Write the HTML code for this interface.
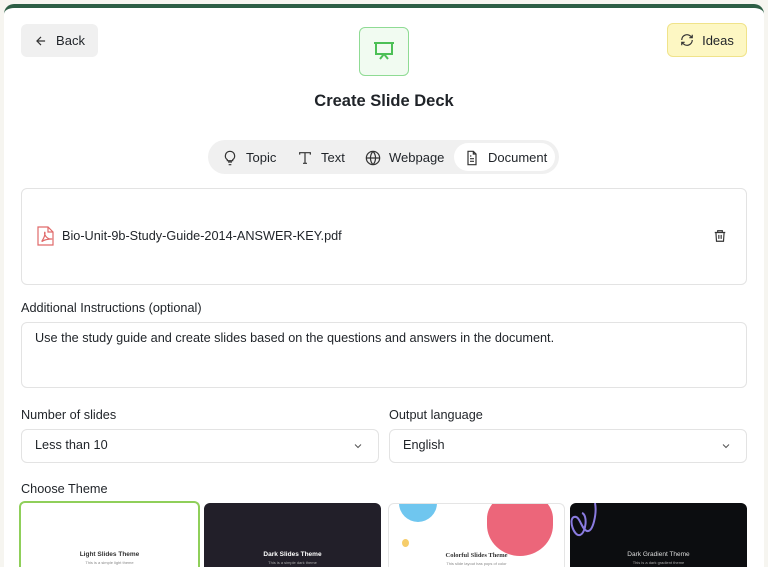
<!DOCTYPE html>
<html style="width:768px;height:567px;overflow:hidden"><head><style>
*{box-sizing:border-box;margin:0;padding:0}
body{width:768px;height:567px;overflow:hidden;background:#f6f5f0;font-family:"Liberation Sans",sans-serif;color:#1f2328;position:relative}
.card{position:absolute;left:4px;top:4px;width:760px;height:563px;background:#fff;border-radius:10px 10px 0 0;overflow:hidden;border-top:4px solid #2d5e45}
.abs{position:absolute}
.btn{position:absolute;border-radius:6px;font-size:13px;display:flex;align-items:center;gap:8px;justify-content:center}
.lbl{position:absolute;font-size:12.7px;color:#1f2328}
.box{position:absolute;border:1px solid #e3e3e3;border-radius:6px;background:#fff}
.theme{position:absolute;top:503px;width:177px;height:64px;border-radius:6px 6px 0 0;overflow:hidden;text-align:center}
.theme .t{position:absolute;top:48px;width:100%;font-size:6.5px;font-weight:bold}
.theme .s{position:absolute;top:57px;width:100%;font-size:4px;color:#888}
</style></head><body>
<div class="card"></div>
<div class="btn" style="left:21px;top:24px;width:77px;height:33px;background:#f0f0f0">
<svg width="14" height="14" viewBox="0 0 24 24" fill="none" stroke="#333" stroke-width="2"><path d="M19 12H5M12 19l-7-7 7-7"/></svg>Back</div>
<div class="btn" style="left:667px;top:23px;width:80px;height:34px;background:#fdf7c3;border:1px solid #f0e38a">
<svg width="14" height="14" viewBox="0 0 24 24" fill="none" stroke="#333" stroke-width="2"><path d="M3 12a9 9 0 0 1 15-6.7L21 8M21 3v5h-5M21 12a9 9 0 0 1-15 6.7L3 16M3 21v-5h5"/></svg>Ideas</div>
<div class="abs" style="left:359px;top:27px;width:50px;height:49px;border:1px solid #8fdb94;border-radius:6px;background:#f1fbf1;display:flex;align-items:center;justify-content:center">
<svg width="24" height="24" viewBox="0 0 24 24" fill="none" stroke="#4cc056" stroke-width="2"><path d="M2 3h20M4 3v11h16V3M12 14l-4 5M12 14l4 5"/></svg></div>
<div class="abs" style="left:0;width:768px;top:92px;text-align:center;font-size:16.5px;font-weight:bold">Create Slide Deck</div>
<div class="abs" style="left:208px;top:140px;width:351px;height:34px;background:#f0f0f0;border-radius:17px"></div>
<div class="abs" style="left:454px;top:143px;width:101px;height:28px;background:#fff;border-radius:14px"></div>
<div class="abs" style="top:150px;left:222px;font-size:13px;display:flex;gap:0">
<span style="position:absolute;left:0;display:flex;gap:8px;white-space:nowrap"><svg width="16" height="16" viewBox="0 0 24 24" fill="none" stroke="#333" stroke-width="1.8"><path d="M9 18h6M10 22h4M12 2a7 7 0 0 0-4 12.7V16h8v-1.3A7 7 0 0 0 12 2z"/></svg>Topic</span>
<span style="position:absolute;left:75px;display:flex;gap:8px;white-space:nowrap"><svg width="16" height="16" viewBox="0 0 24 24" fill="none" stroke="#333" stroke-width="1.8"><path d="M4 7V4h16v3M12 4v16M9 20h6"/></svg>Text</span>
<span style="position:absolute;left:143px;display:flex;gap:8px;white-space:nowrap"><svg width="16" height="16" viewBox="0 0 24 24" fill="none" stroke="#333" stroke-width="1.8"><circle cx="12" cy="12" r="10"/><path d="M2 12h20M12 2a15 15 0 0 1 0 20M12 2a15 15 0 0 0 0 20"/></svg>Webpage</span>
<span style="position:absolute;left:242px;display:flex;gap:8px;white-space:nowrap"><svg width="16" height="16" viewBox="0 0 24 24" fill="none" stroke="#333" stroke-width="1.8"><path d="M14 2H6v20h12V6zM14 2v4h4M9 13h6M9 17h6M9 9h2"/></svg>Document</span>
</div>
<div class="box" style="left:21px;top:188px;width:726px;height:97px"></div>
<svg class="abs" style="left:37px;top:226px" width="18" height="20" viewBox="0 0 18 20" fill="none" stroke="#e06a6a" stroke-width="1.2"><path d="M1 1h10l5 5v13H1zM11 1v5h5"/><path d="M5 15c2-3 3-6 3-8s-1 0-0 2 3 4 6 4-3 0-6 1-3 2-3 1z"/></svg>
<div class="lbl" style="left:62px;top:229px">Bio-Unit-9b-Study-Guide-2014-ANSWER-KEY.pdf</div>
<svg class="abs" style="left:713px;top:229px" width="14" height="14" viewBox="0 0 24 24" fill="none" stroke="#333" stroke-width="2"><path d="M3 6h18M8 6V3h8v3M5 6l1 15h12l1-15M10 10v7M14 10v7"/></svg>
<div class="lbl" style="left:21px;top:301px">Additional Instructions (optional)</div>
<div class="box" style="left:21px;top:322px;width:726px;height:66px"></div>
<div class="lbl" style="left:35px;top:331px">Use the study guide and create slides based on the questions and answers in the document.</div>
<div class="lbl" style="left:21px;top:408px">Number of slides</div>
<div class="lbl" style="left:389px;top:408px">Output language</div>
<div class="box" style="left:21px;top:429px;width:358px;height:34px"></div>
<div class="lbl" style="left:35px;top:438px">Less than 10</div>
<div class="box" style="left:389px;top:429px;width:358px;height:34px"></div>
<div class="lbl" style="left:403px;top:438px">English</div>
<svg class="abs" style="left:352px;top:440px" width="12" height="12" viewBox="0 0 24 24" fill="none" stroke="#555" stroke-width="2"><path d="M6 9l6 6 6-6"/></svg>
<svg class="abs" style="left:720px;top:440px" width="12" height="12" viewBox="0 0 24 24" fill="none" stroke="#555" stroke-width="2"><path d="M6 9l6 6 6-6"/></svg>
<div class="lbl" style="left:21px;top:482px">Choose Theme</div>
<div class="theme" style="left:19px;top:501px;width:181px;height:66px;border:2px solid #8fcf5a;border-bottom:none;background:#fff;color:#333"><div class="t" style="top:48px">Light Slides Theme</div><div class="s" style="top:57px">This is a simple light theme</div></div>
<div class="theme" style="left:204px;background:#221f29;color:#fff"><div class="t">Dark Slides Theme</div><div class="s" style="color:#aaa">This is a simple dark theme</div></div>
<div class="theme" style="left:388px;background:#fff;border:1px solid #e5e5e5;border-bottom:none;color:#333">
<div class="abs" style="left:10px;top:-20px;width:38px;height:38px;border-radius:50%;background:#6fc6ef"></div>
<div class="abs" style="left:98px;top:-10px;width:66px;height:62px;border-radius:40% 40% 50% 50%;background:#ec667a"></div>
<div class="abs" style="left:13px;top:35px;width:7px;height:8px;border-radius:50%;background:#f6cd6a"></div>
<div class="t" style="font-family:'Liberation Serif',serif">Colorful Slides Theme</div><div class="s">This slide layout has pops of color</div></div>
<div class="theme" style="left:570px;background:#0c0d10;color:#ddd">
<svg class="abs" style="left:0;top:0" width="30" height="45" viewBox="0 0 30 45" fill="none" stroke="#8a7be0" stroke-width="2"><path d="M25 0c2 10-2 30-8 28S10 12 4 14s0 20 6 18 8-20 2-22"/></svg>
<div class="t" style="font-weight:normal">Dark Gradient Theme</div><div class="s" style="color:#aaa">This is a dark gradient theme</div></div>
</body></html>
